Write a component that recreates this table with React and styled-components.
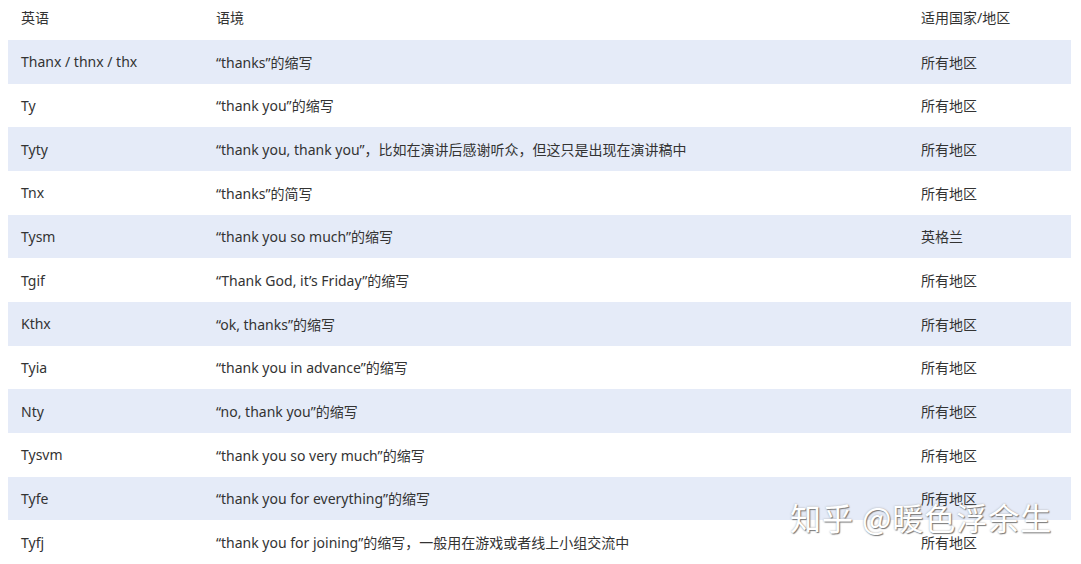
import React from "react";
import styled, { createGlobalStyle } from "styled-components";

const Global = createGlobalStyle`
  html, body { margin: 0; padding: 0; background: #fff; }
  body { font-family: "Noto Sans", "Noto Sans CJK SC", sans-serif; }
`;

const Page = styled.div`
  position: relative;
  width: 1081px;
  height: 564px;
  overflow: hidden;
  padding: 0 10px 0 8px;
  box-sizing: border-box;
`;

const Table = styled.div`
  display: flex;
  flex-direction: column;
`;

const Row = styled.div`
  display: grid;
  grid-template-columns: 195px 705px 1fr;
  align-items: ${(p) => (p.$head ? "start" : "center")};
  padding-top: ${(p) => (p.$head ? "7px" : "0")};
  box-sizing: border-box;
  height: ${(p) => (p.$head ? "40px" : "43.67px")};
  background: ${(p) => (p.$striped ? "#e5ebf8" : "transparent")};
  color: #333;
  font-size: 14px;
  font-family: "Noto Sans", "Noto Sans CJK SC", sans-serif;
`;

const Cell = styled.div`
  padding-left: 13px;
  white-space: nowrap;
`;

const Watermark = styled.div`
  position: absolute;
  left: 790px;
  top: 494px;
  font-family: "Noto Sans CJK SC", sans-serif;
  font-size: 31px;
  color: #fff;
  letter-spacing: 1px;
  text-shadow: 1px 1px 1px #7a7a7a, 0 0 2px #aaa;
  white-space: nowrap;
`;

const rows = [
  ["Thanx / thnx / thx", "“thanks”的缩写", "所有地区"],
  ["Ty", "“thank you”的缩写", "所有地区"],
  ["Tyty", "“thank you, thank you”，比如在演讲后感谢听众，但这只是出现在演讲稿中", "所有地区"],
  ["Tnx", "“thanks”的简写", "所有地区"],
  ["Tysm", "“thank you so much”的缩写", "英格兰"],
  ["Tgif", "“Thank God, it’s Friday”的缩写", "所有地区"],
  ["Kthx", "“ok, thanks”的缩写", "所有地区"],
  ["Tyia", "“thank you in advance”的缩写", "所有地区"],
  ["Nty", "“no, thank you”的缩写", "所有地区"],
  ["Tysvm", "“thank you so very much”的缩写", "所有地区"],
  ["Tyfe", "“thank you for everything”的缩写", "所有地区"],
  ["Tyfj", "“thank you for joining”的缩写，一般用在游戏或者线上小组交流中", "所有地区"],
];

export default function App() {
  return (
    <Page>
      <Global />
      <Table>
        <Row $head>
          <Cell>英语</Cell>
          <Cell>语境</Cell>
          <Cell>适用国家/地区</Cell>
        </Row>
        {rows.map((r, i) => (
          <Row key={i} $striped={i % 2 === 0}>
            <Cell>{r[0]}</Cell>
            <Cell>{r[1]}</Cell>
            <Cell>{r[2]}</Cell>
          </Row>
        ))}
      </Table>
      <Watermark>知乎 @暖色浮余生</Watermark>
    </Page>
  );
}
